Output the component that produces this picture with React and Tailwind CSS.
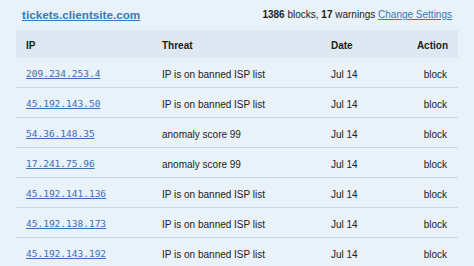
const rows = [
  { ip: "209.234.253.4", threat: "IP is on banned ISP list" },
  { ip: "45.192.143.50", threat: "IP is on banned ISP list" },
  { ip: "54.36.148.35", threat: "anomaly score 99" },
  { ip: "17.241.75.96", threat: "anomaly score 99" },
  { ip: "45.192.141.136", threat: "IP is on banned ISP list" },
  { ip: "45.192.138.173", threat: "IP is on banned ISP list" },
  { ip: "45.192.143.192", threat: "IP is on banned ISP list" },
];

export default function App() {
  return (
    <div
      className="w-[474px] h-[266px] overflow-hidden bg-[#e9f1f9] text-[#1c1c1c]"
      style={{ fontFamily: '"Liberation Sans", Arial, sans-serif' }}
    >
      {/* top bar */}
      <div className="flex items-end justify-between pl-[22px] pr-[22px] pt-[7px] h-[30px]">
        <a className="text-[11.7px] font-bold text-[#3b78b8] underline leading-none pb-[9px]">
          tickets.clientsite.com
        </a>
        <div className="text-[10px] leading-none pb-[10px]">
          <b>1386</b> blocks, <b>17</b> warnings{" "}
          <a className="text-[#3b78b8] underline">Change Settings</a>
        </div>
      </div>

      <div className="mx-4">
        <div className="grid grid-cols-[136px_169px_1fr_auto] h-[28px] pt-[3px] items-center bg-[#dde8f3] text-[10px] font-bold px-[10px]">
          <div>IP</div>
          <div>Threat</div>
          <div>Date</div>
          <div className="text-right">Action</div>
        </div>
        {rows.map((r, i) => (
          <div
            key={i}
            className={`grid grid-cols-[136px_169px_1fr_auto] h-[30px] pt-[3px] items-center text-[10px] px-[10px] ${i < rows.length - 1 ? "border-b border-[#cdd8e3]" : ""}`}
          >
            <a
              className="text-[#3b6fb8] underline text-[9.5px]"
              style={{ fontFamily: '"DejaVu Sans Mono", Menlo, monospace' }}
            >
              {r.ip}
            </a>
            <div>{r.threat}</div>
            <div>Jul 14</div>
            <div className="text-right pr-[1px]">block</div>
          </div>
        ))}
      </div>
    </div>
  );
}
